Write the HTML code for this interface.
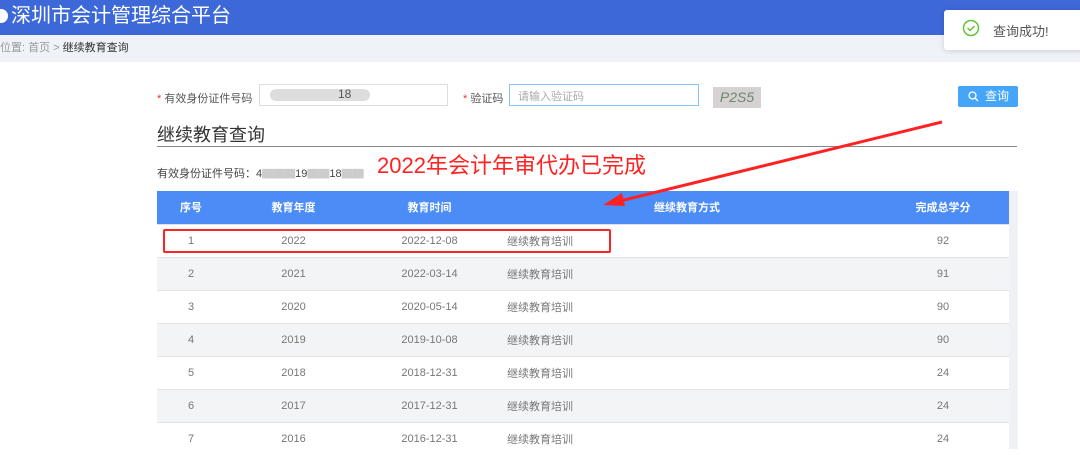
<!DOCTYPE html>
<html><head><meta charset="utf-8"><style>
*{margin:0;padding:0;box-sizing:border-box}
body{width:1080px;height:449px;overflow:hidden;background:#fff;font-family:"Liberation Sans","Noto Sans CJK SC",sans-serif;position:relative;color:#333}
.hd{position:absolute;left:0;top:0;width:1080px;height:35px;background:#3d68d8;color:#fff;font-size:20px;line-height:30px}
.bc{position:absolute;left:0;top:35px;width:1080px;height:27px;background:#eff3f7;font-size:11px;line-height:27px;color:#999}
.abs{position:absolute}
.lbl{font-size:11px;color:#555}
.inp{position:absolute;height:22px;border:1px solid #ddd;background:#fff}
table{position:absolute;left:157px;top:191px;width:852px;border-collapse:collapse;font-size:11px;color:#777;table-layout:fixed}
th{background:#4b8cf7;color:#fff;height:33px;font-weight:bold;font-size:11px}
td{height:33px;border-top:1px solid #e2e2e2;text-align:center}
tr:nth-child(odd) td{background:#f3f4f6}
</style></head><body>
<div class="hd"><span style="position:absolute;left:0;top:9px;width:8px;height:14px;background:#fff;border-radius:0 7px 7px 0"></span><span style="position:absolute;left:11px;top:1px">深圳市会计管理综合平台</span></div>
<div class="bc"><span style="position:absolute;left:0">位置: 首页 &gt; <span style="color:#333">继续教育查询</span></span></div>
<div class="abs" style="left:944px;top:10px;width:140px;height:40px;background:#fff;box-shadow:0 1px 6px rgba(0,0,0,.15);border-radius:3px">
<svg class="abs" style="left:18px;top:9px" width="18" height="18" viewBox="0 0 18 18"><circle cx="9" cy="9" r="7.5" fill="none" stroke="#67c23a" stroke-width="1.5"/><path d="M5.5 9l2.5 2.5 4.5-4.5" fill="none" stroke="#67c23a" stroke-width="1.5"/></svg>
<span class="abs" style="left:49px;top:11px;font-size:13px;color:#555">查询成功!</span></div>
<span class="abs lbl" style="left:157px;top:90px"><span style="color:#e33">*</span> 有效身份证件号码</span>
<div class="inp" style="left:259px;top:84px;width:189px"><span class="abs" style="left:10px;top:4px;width:100px;height:12px;background:#ddd;border-radius:6px"></span><span class="abs" style="left:78px;top:2px;font-size:12px;color:#555">18</span></div>
<span class="abs lbl" style="left:463px;top:90px"><span style="color:#e33">*</span> 验证码</span>
<div class="inp" style="left:509px;top:84px;width:190px;border-color:#8cc4f7"><span class="abs" style="left:8px;top:3px;font-size:11px;color:#aaa">请输入验证码</span></div>
<div class="abs" style="left:713px;top:87px;width:48px;height:21px;background:#d6d2d4;color:#6a8a6a;font-size:14px;font-style:italic;line-height:21px;text-align:center">P2S5</div>
<div class="abs" style="left:958px;top:86px;width:60px;height:21px;background:#45a5f8;border-radius:2px;color:#fff;font-size:12px;line-height:21px"><svg class="abs" style="left:10px;top:5px" width="11" height="11" viewBox="0 0 11 11"><circle cx="4.5" cy="4.5" r="3.5" fill="none" stroke="#fff" stroke-width="1.3"/><path d="M7 7l3 3" stroke="#fff" stroke-width="1.3"/></svg><span class="abs" style="left:27px">查询</span></div>
<span class="abs" style="left:157px;top:121px;font-size:18px;color:#333">继续教育查询</span>
<div class="abs" style="left:157px;top:146px;width:860px;height:1px;background:#888"></div>
<span class="abs" style="left:157px;top:165px;font-size:11px;color:#444">有效身份证件号码：4<span style="color:#ccc">▇▇▇</span>19<span style="color:#ccc">▇▇</span>18<span style="color:#ccc">▇▇</span></span>
<span class="abs" style="left:377px;top:148px;font-size:22px;color:#f22">2022年会计年审代办已完成</span>
<div class="abs" style="left:1009px;top:191px;width:9px;height:258px;background:#f0f1f4"></div>
<table>
<colgroup><col style="width:68px"><col style="width:137px"><col style="width:135px"><col style="width:380px"><col></colgroup>
<tr><th>序号</th><th>教育年度</th><th>教育时间</th><th>继续教育方式</th><th>完成总学分</th></tr>
<tr><td>1</td><td>2022</td><td>2022-12-08</td><td style="text-align:left;padding-left:10px">继续教育培训</td><td>92</td></tr>
<tr><td>2</td><td>2021</td><td>2022-03-14</td><td style="text-align:left;padding-left:10px">继续教育培训</td><td>91</td></tr>
<tr><td>3</td><td>2020</td><td>2020-05-14</td><td style="text-align:left;padding-left:10px">继续教育培训</td><td>90</td></tr>
<tr><td>4</td><td>2019</td><td>2019-10-08</td><td style="text-align:left;padding-left:10px">继续教育培训</td><td>90</td></tr>
<tr><td>5</td><td>2018</td><td>2018-12-31</td><td style="text-align:left;padding-left:10px">继续教育培训</td><td>24</td></tr>
<tr><td>6</td><td>2017</td><td>2017-12-31</td><td style="text-align:left;padding-left:10px">继续教育培训</td><td>24</td></tr>
<tr><td>7</td><td>2016</td><td>2016-12-31</td><td style="text-align:left;padding-left:10px">继续教育培训</td><td>24</td></tr>
</table>
<div class="abs" style="left:163px;top:229px;width:448px;height:24px;border:2px solid #f22;border-radius:2px"></div>
<svg class="abs" style="left:0;top:0" width="1080" height="449"><path d="M942 122L620 201" stroke="#f22" stroke-width="3"/><path d="M603 205L622 193L625 206Z" fill="#f22"/></svg>
</body></html>
